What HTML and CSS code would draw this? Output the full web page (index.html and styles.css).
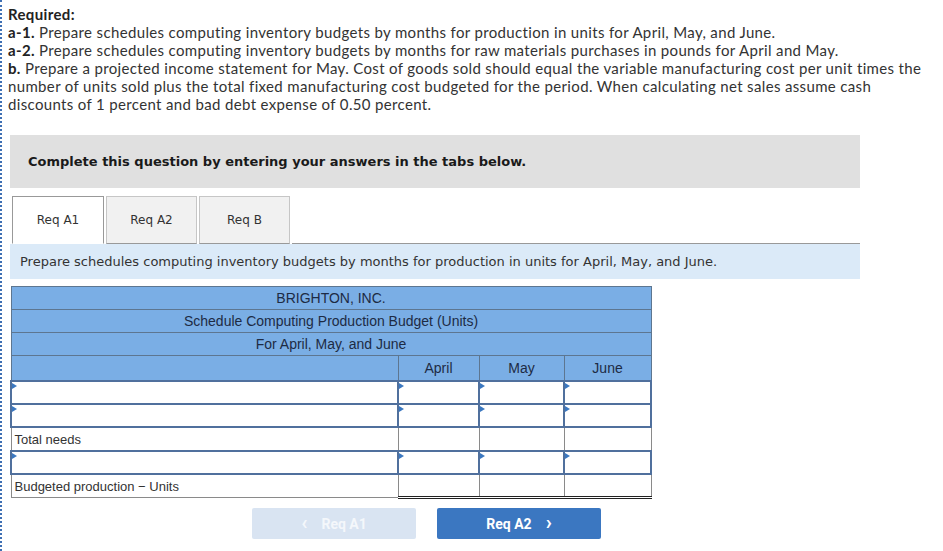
FILE: index.html
```html
<!DOCTYPE html>
<html>
<head>
<meta charset="utf-8">
<link rel="stylesheet" href="styles.css">
</head>
<body>
<div class="page">
  <div class="required">
    <div class="req-title">Required:</div>
    <div><b>a-1.</b> Prepare schedules computing inventory budgets by months for production in units for April, May, and June.</div>
    <div><b>a-2.</b> Prepare schedules computing inventory budgets by months for raw materials purchases in pounds for April and May.</div>
    <div><b>b.</b> Prepare a projected income statement for May. Cost of goods sold should equal the variable manufacturing cost per unit times the number of units sold plus the total fixed manufacturing cost budgeted for the period. When calculating net sales assume cash discounts of 1 percent and bad debt expense of 0.50 percent.</div>
  </div>

  <div class="complete-box">Complete this question by entering your answers in the tabs below.</div>

  <div class="tabs">
    <div class="tab active">Req A1</div>
    <div class="tab">Req A2</div>
    <div class="tab">Req B</div>
    <div class="tab-rest"></div>
  </div>

  <div class="instruction">Prepare schedules computing inventory budgets by months for production in units for April, May, and June.</div>

  <table class="sched">
    <colgroup>
      <col class="label-col">
      <col class="c-apr">
      <col class="c-may">
      <col class="c-jun">
    </colgroup>
    <tr class="hdr"><td colspan="4">BRIGHTON, INC.</td></tr>
    <tr class="hdr"><td colspan="4">Schedule Computing Production Budget (Units)</td></tr>
    <tr class="hdr"><td colspan="4">For April, May, and June</td></tr>
    <tr class="hdr months"><td></td><td>April</td><td>May</td><td>June</td></tr>
    <tr class="row"><td class="in"></td><td class="in"></td><td class="in"></td><td class="in"></td></tr>
    <tr class="row"><td class="in"></td><td class="in"></td><td class="in"></td><td class="in"></td></tr>
    <tr class="row"><td class="lbl">Total needs</td><td class="tot"></td><td class="tot"></td><td class="tot"></td></tr>
    <tr class="row"><td class="in"></td><td class="in"></td><td class="in"></td><td class="in"></td></tr>
    <tr class="row"><td class="lbl">Budgeted production &minus; Units</td><td class="fin"></td><td class="fin"></td><td class="fin"></td></tr>
  </table>

  <div class="nav">
    <div class="btn prev"><span class="chev">&lsaquo;</span>Req A1</div>
    <div class="btn next">Req A2<span class="chev">&rsaquo;</span></div>
  </div>
</div>
</body>
</html>
```

FILE: styles.css
```css
html, body {
  margin: 0;
  padding: 0;
  background: #ffffff;
}

.page {
  border-left: 2px dotted #3e6fb3;
  padding: 5px 0 0 6px;
  box-sizing: border-box;
  height: 551px;
  overflow: hidden;
}

.required {
  font-family: Lato, "Open Sans", sans-serif;
  font-size: 15px;
  letter-spacing: 0.35px;
  line-height: 18px;
  color: #333333;
  width: 930px;
}

.req-title {
  font-weight: bold;
  color: #222;
}

.required b {
  color: #222;
}

.complete-box {
  margin: 22px 0 0 2px;
  width: 850px;
  height: 53px;
  background: #e0e0e0;
  box-sizing: border-box;
  padding-left: 18px;
  display: flex;
  align-items: center;
  font-family: "DejaVu Sans", Verdana, sans-serif;
  font-weight: bold;
  font-size: 13px;
  color: #1a1a1a;
}

.tabs {
  display: flex;
  margin: 8px 0 0 4px;
  width: 848px;
  height: 48px;
  align-items: flex-end;
}

.tab {
  width: 91px;
  height: 48px;
  box-sizing: border-box;
  border: 1px solid #c6c6c6;
  border-bottom: 1px solid #999;
  background: #f1f1f1;
  display: flex;
  align-items: center;
  justify-content: center;
  font-family: "DejaVu Sans", Verdana, sans-serif;
  font-size: 12px;
  color: #333;
  margin-right: 2px;
}

.tab.active {
  background: #ffffff;
  border-color: #999;
  border-bottom-color: transparent;
  width: 92px;
}

.tab-rest {
  flex: 1;
  height: 1px;
  background: #999;
}

.instruction {
  margin-left: 2px;
  width: 850px;
  height: 35px;
  background: #dbeaf8;
  box-sizing: border-box;
  padding-left: 10px;
  display: flex;
  align-items: center;
  font-family: "DejaVu Sans", Verdana, sans-serif;
  font-size: 13px;
  color: #333;
}

.sched {
  margin: 7px 0 0 2px;
  border-collapse: collapse;
  width: 640px;
  font-family: "Liberation Sans", Arial, sans-serif;
  font-size: 14px;
  color: #1d2b44;
  table-layout: fixed;
}

.sched td {
  padding: 0;
}

.hdr td {
  background: #7aaee5;
  border: 1px solid #5d7690;
  height: 22px;
  text-align: center;
}

.months td {
  height: 24px;
}

.label-col { width: 387px; }
.c-apr { width: 81px; }
.c-may { width: 85px; }
.c-jun { width: 87px; }

.row td {
  height: 21px;
  background: #fff;
}

td.in {
  border: 2px solid #50709d;
  position: relative;
}

td.in::before {
  content: "";
  position: absolute;
  top: 1px;
  left: 0;
  border-top: 3px solid transparent;
  border-bottom: 3px solid transparent;
  border-left: 5px solid #3b78c0;
}

td.lbl {
  border: 1px solid #8a8a8a;
  padding-left: 3px;
  font-size: 13px;
  color: #333;
  text-align: left;
  height: 22px;
  white-space: nowrap;
}

td.tot {
  border: 1px solid #8a8a8a;
  border-top: 2px solid #222;
}

td.fin {
  border: 1px solid #8a8a8a;
  border-bottom: 3px double #222;
}

.nav {
  display: flex;
  gap: 21px;
  margin: 9px 0 0 244px;
}

.btn {
  width: 164px;
  height: 31px;
  border-radius: 2px;
  display: flex;
  align-items: center;
  justify-content: center;
  font-family: Roboto, "Liberation Sans", sans-serif;
  font-weight: bold;
  font-size: 14px;
  color: #fff;
}

.btn.prev {
  background: #d9e4f2;
  color: #f4f7fb;
}

.btn.next {
  background: #3b77c1;
}

.chev {
  font-size: 20px;
  font-weight: bold;
  line-height: 1;
  margin-top: -3px;
}

.prev .chev { margin-right: 14px; }
.next .chev { margin-left: 14px; }
```
